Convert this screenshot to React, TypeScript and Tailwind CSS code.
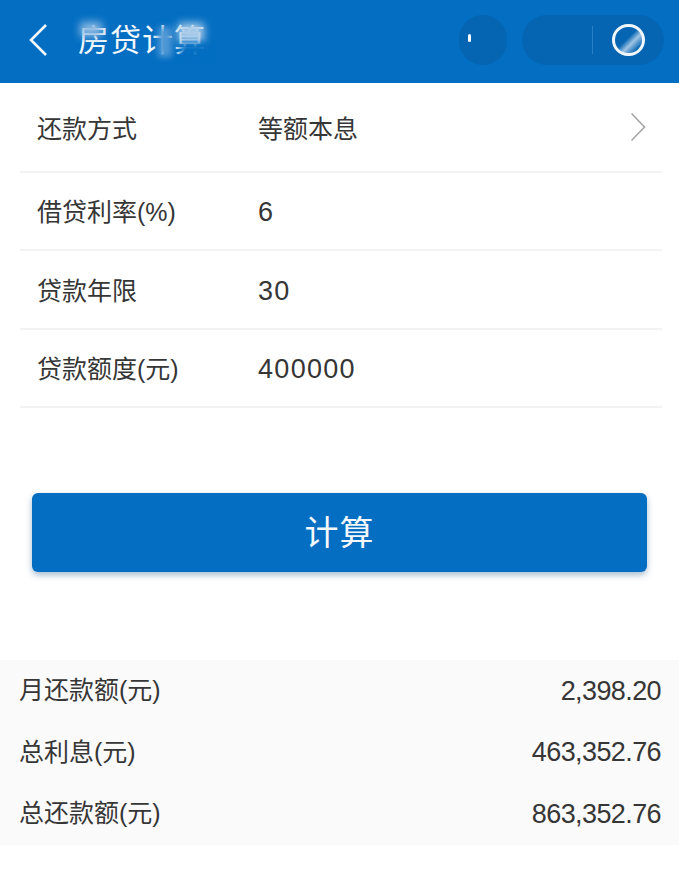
const FONT = "font-['Liberation_Sans','Noto_Sans_CJK_SC',sans-serif]";

const fields = [
  { label: '还款方式', value: '等额本息', arrow: true, height: 'h-[90px] pt-[5px]', valueClass: 'text-[25px]' },
  { label: '借贷利率(%)', value: '6', height: 'h-[78px] pt-[3px]', valueClass: 'text-[27px] tracking-[1.3px]' },
  { label: '贷款年限', value: '30', height: 'h-[79px] pt-[4px]', valueClass: 'text-[27px] tracking-[1.3px]' },
  { label: '贷款额度(元)', value: '400000', height: 'h-[78px] pt-[3px]', valueClass: 'text-[27px] tracking-[1.3px]' },
];

const results = [
  { label: '月还款额(元)', value: '2,398.20' },
  { label: '总利息(元)', value: '463,352.76' },
  { label: '总还款额(元)', value: '863,352.76' },
];

function Header() {
  return (
    <header className="flex h-[83px] items-center bg-[#036ec2] pb-[3px] pl-[27px] pr-[15px] text-white">
      <svg width="24" height="34" viewBox="0 0 24 34" fill="none" className="shrink-0">
        <path d="M19 2 L4 17 L19 32" stroke="#f4f8fc" strokeWidth="2.6" />
      </svg>
      <div className="relative ml-[27px] text-[31px] leading-none tracking-[1px] text-[#f2f7fc]">
        房贷计算
        {/* smudged parts of the title */}
        <span className="absolute left-[2px] top-[-3px] h-[15px] w-[22px] bg-[#8ab8e2] blur-[4px]" />
        <span className="absolute left-[80px] top-[2px] h-[30px] w-[14px] bg-[#4f97d4] blur-[3px]" />
        <span className="absolute left-[100px] top-[-2px] h-[20px] w-[26px] bg-[#a9cbe9] blur-[4px]" />
        <span className="absolute left-[102px] top-[18px] h-[14px] w-[28px] bg-[#036ec2] blur-[3px]" />
      </div>
      <div className="ml-auto flex items-center gap-[15px]">
        <div className="relative h-[50px] w-[48px] rounded-full bg-[#0565b2]">
          <span className="absolute left-[9px] top-[19px] h-[8px] w-[3px] rounded-full bg-white" />
        </div>
        <div className="flex h-[50px] w-[142px] items-center rounded-full bg-[#0565b2] pl-[70px]">
          <span className="h-[28px] w-px bg-[#2a7fc4]" />
          <span className="ml-[19px] h-[32px] w-[33px] rounded-full border-[3px] border-[#f0f6fb] bg-[linear-gradient(135deg,#0565b2_45%,#9fc4e4_62%,#0565b2_85%)]" />
        </div>
      </div>
    </header>
  );
}

function Field({ label, value, arrow, height, valueClass }: { label: string; value: string; arrow?: boolean; height: string; valueClass: string }) {
  return (
    <div className={`flex items-center border-b-2 border-[#f3f3f3] pl-[17px] pr-[16px] ${height}`}>
      <span className="w-[221px] text-[25px] text-[#363636]">{label}</span>
      <span className={`text-[#363636] ${valueClass}`}>{value}</span>
      {arrow && (
        <svg width="16" height="30" viewBox="0 0 16 30" fill="none" className="-mt-[5px] ml-auto">
          <path d="M1.5 1.5 L14.5 15 L1.5 28.5" stroke="#a6a6a6" strokeWidth="1.6" />
        </svg>
      )}
    </div>
  );
}

export default function App() {
  return (
    <div className={`min-h-[885px] bg-white ${FONT}`}>
      <Header />
      <section className="ml-5 mr-[17px]">
        {fields.map((f) => (
          <Field key={f.label} {...f} />
        ))}
      </section>
      <div className="mx-8 mt-[85px]">
        <button className="flex h-[79px] w-[615px] items-center justify-center rounded-md bg-[#036ec2] pt-[2px] text-[34px] tracking-[1px] text-[#f4f8fc] shadow-[0_3px_6px_rgba(0,60,120,0.35)]">
          计算
        </button>
      </div>
      <section className="mt-[88px] bg-[#fafafa] pl-[19px] pr-[18px]">
        {results.map((r) => (
          <div key={r.label} className="flex h-[61.67px] items-center justify-between text-[25px] text-[#363636]">
            <span>{r.label}</span>
            <span className="text-[27px] tracking-[-0.6px]">{r.value}</span>
          </div>
        ))}
      </section>
    </div>
  );
}
